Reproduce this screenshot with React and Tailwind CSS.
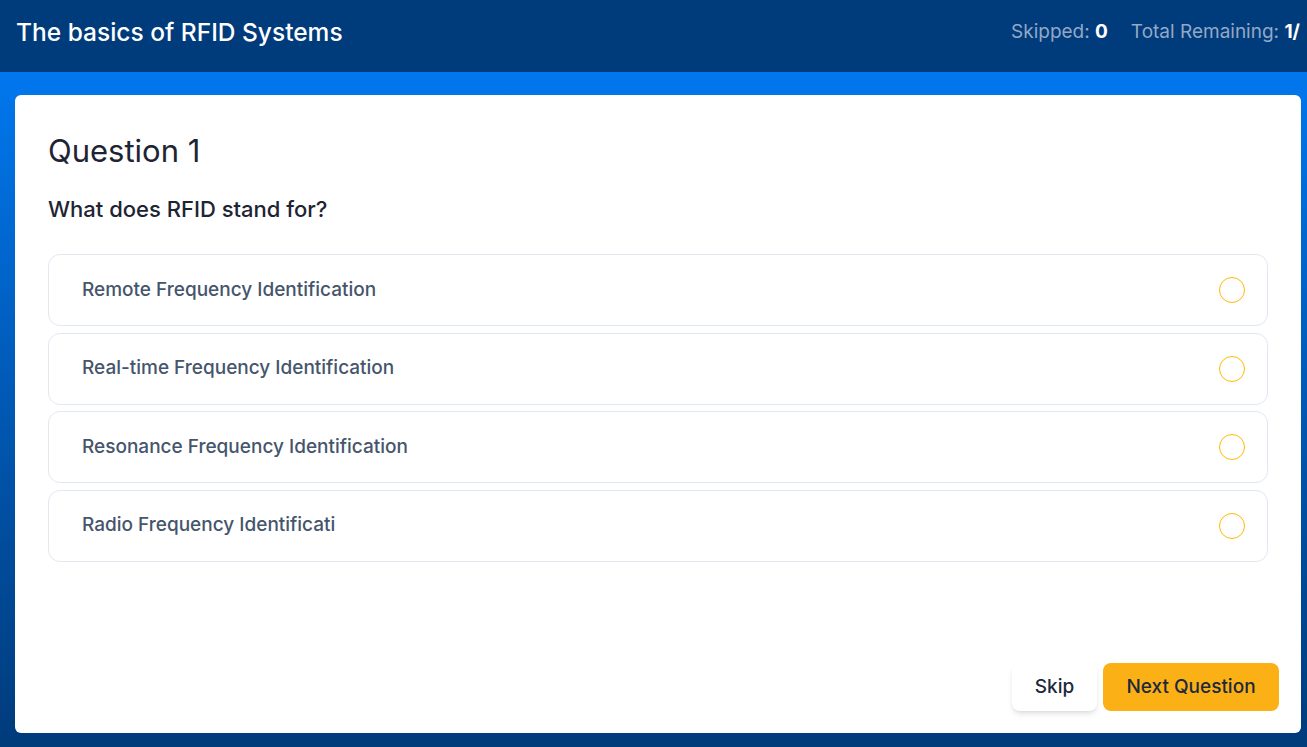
import React from 'react';

const options = [
    'Remote Frequency Identification',
    'Real-time Frequency Identification',
    'Resonance Frequency Identification',
    'Radio Frequency Identificati',
];

const OptionRow = ({ label }) => (
    <div className="flex h-[72px] items-center justify-between rounded-xl border border-slate-200 bg-white pl-[33px] pr-[22px]">
        <span className="text-[19px] font-medium text-slate-600">{label}</span>
        <span className="h-[26px] w-[26px] rounded-full border-[1.5px] border-amber-400" />
    </div>
);

export default function App() {
    return (
        <div className="flex h-[747px] flex-col overflow-hidden font-['Inter','Noto_Sans',sans-serif]">
            {/* Header */}
            <header className="flex h-[72px] flex-shrink-0 items-center justify-between bg-[#003b7b] pb-2 pl-4 pr-[7px]">
                <h1 className="text-[24.5px] font-medium text-white">The basics of RFID Systems</h1>
                <div className="flex items-center gap-[23px] whitespace-nowrap text-[19px] text-[#93a8c6]">
                    <span>
                        Skipped: <b className="font-bold text-white">0</b>
                    </span>
                    <span>
                        Total Remaining: <b className="font-bold text-white">1/</b>
                    </span>
                </div>
            </header>

            {/* Body */}
            <main className="flex flex-1 flex-col bg-gradient-to-b from-[#0177ee] to-[#003b7b] pb-[14px] pl-[15px] pr-[6px] pt-[23px]">
                <div className="flex flex-1 flex-col rounded-md bg-white px-[33px] pb-[22px] pt-[36px]">
                    <h2 className="text-[31px] leading-10 text-[#1e2433]">Question 1</h2>
                    <p className="mt-[24px] text-[22px] font-medium leading-7 text-[#1e2433]">What does RFID stand for?</p>

                    <div className="mt-[31px] flex flex-col gap-[6.5px]">
                        {options.map((opt) => (
                            <OptionRow key={opt} label={opt} />
                        ))}
                    </div>

                    <div className="-mr-[11px] mt-auto flex justify-end gap-[6px]">
                        <button className="h-12 w-[85px] rounded-lg bg-white text-[19px] font-medium text-slate-800 shadow-md">
                            Skip
                        </button>
                        <button className="h-12 w-[176px] rounded-lg bg-[#fbb116] text-[19px] font-medium text-slate-800">
                            Next Question
                        </button>
                    </div>
                </div>
            </main>
        </div>
    );
}
